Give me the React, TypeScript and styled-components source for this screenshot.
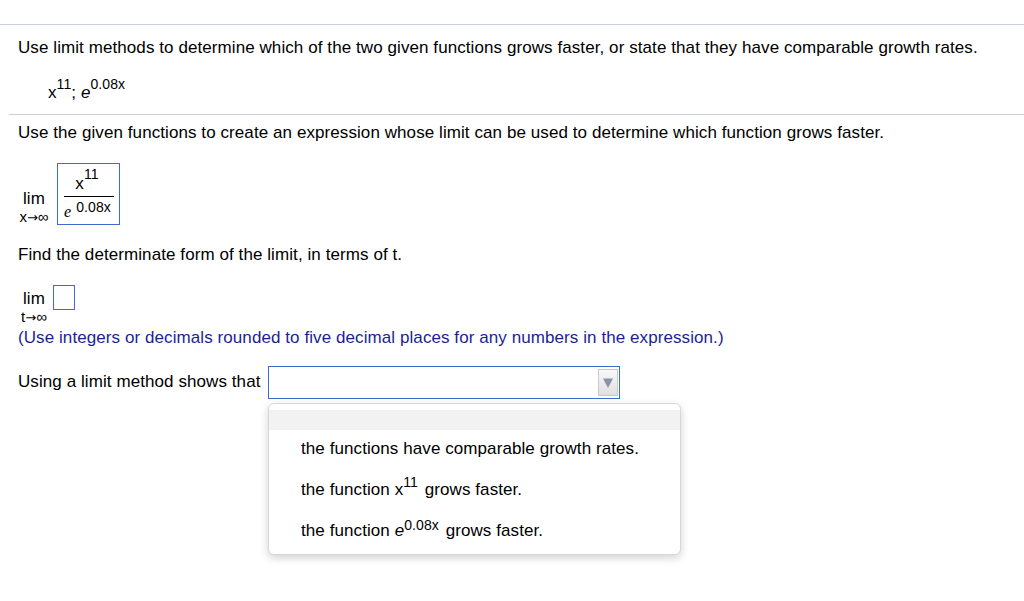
import React from "react";
import styled, { createGlobalStyle } from "styled-components";

const GlobalStyle = createGlobalStyle`
	body {
		margin: 0;
		background: #fff;
		font-family: "Liberation Sans", Arial, sans-serif;
		font-size: 17px;
		letter-spacing: 0.08px;
		color: #000;
	}
`;

const App = () => {
	return (
		<>
			<GlobalStyle />
			<Page>
				<Prompt>
					<Line>
						Use limit methods to determine which of the two given functions grows
						faster, or state that they have comparable growth rates.
					</Line>
					<Functions>
						x<Sup $raise={9}>11</Sup>; <E>e</E>
						<Sup $raise={9}>0.08x</Sup>
					</Functions>
				</Prompt>
				<Body>
					<Line>
						Use the given functions to create an expression whose limit can be used
						to determine which function grows faster.
					</Line>
					<LimitRow>
						<LimitLabel>
							<span>lim</span>
							<small>
								x<Arrow>→</Arrow>∞
							</small>
						</LimitLabel>
						<FractionBox>
							<Numerator>
								x<Sup $raise={10}>11</Sup>
							</Numerator>
							<Denominator>
								<SerifE>e</SerifE>
								<Sup $raise={5}>0.08x</Sup>
							</Denominator>
						</FractionBox>
					</LimitRow>
					<Line $top={20}>Find the determinate form of the limit, in terms of t.</Line>
					<AnswerRow>
						<LimitLabel $small>
							<span>lim</span>
							<small>
								t<Arrow>→</Arrow>∞
							</small>
						</LimitLabel>
						<AnswerBox />
					</AnswerRow>
					<Note>
						(Use integers or decimals rounded to five decimal places for any numbers
						in the expression.)
					</Note>
					<SelectRow>
						<SelectLabel>Using a limit method shows that</SelectLabel>
						<SelectWrap>
							<SelectBox>
								<ArrowButton>
									<svg width='12' height='12' viewBox='0 0 12 12'>
										<polygon points='1,1.5 11,1.5 6,11' fill='#8a93a6' />
									</svg>
								</ArrowButton>
							</SelectBox>
							<Menu>
								<MenuBlank />
								<MenuItem>the functions have comparable growth rates.</MenuItem>
								<MenuItem>
									the function x<Sup $raise={8} $gap={2}>11</Sup> grows faster.
								</MenuItem>
								<MenuItem>
									the function <E>e</E>
									<Sup $raise={6} $gap={2}>0.08x</Sup> grows faster.
								</MenuItem>
							</Menu>
						</SelectWrap>
					</SelectRow>
				</Body>
			</Page>
		</>
	);
};

const Page = styled.div`
	padding-top: 24px;
	min-height: 577px;
`;
const Prompt = styled.section`
	border-top: 1px solid #c8cdd9;
	padding: 13px 0 11px 18px;
`;
const Body = styled.section`
	margin-left: 9px;
	border-top: 1px solid #c8cdd9;
	padding: 8px 0 0 9px;
`;
const Line = styled.p<{ $top?: number }>`
	margin: ${(p) => p.$top ?? 0}px 0 0;
	line-height: 20px;
	white-space: nowrap;
`;
const Functions = styled.p`
	margin: 25px 0 0 30px;
	line-height: 20px;
`;
const Sup = styled.sup<{ $raise: number; $gap?: number }>`
	font-size: 14px;
	line-height: 0;
	vertical-align: ${(p) => p.$raise}px;
	margin-right: ${(p) => p.$gap ?? 0}px;
`;
const E = styled.i`
	font-style: italic;
`;
const SerifE = styled.i`
	font-family: "Liberation Serif", "Times New Roman", serif;
	font-size: 16px;
	font-style: italic;
	margin-right: 5px;
`;
const Arrow = styled.span`
	font-family: "DejaVu Sans", sans-serif;
	font-size: 13px;
`;
const LimitRow = styled.div`
	display: flex;
	align-items: flex-start;
	margin: 20px 0 0 -3px;
`;
const LimitLabel = styled.div<{ $small?: boolean }>`
	display: flex;
	flex-direction: column;
	align-items: center;
	width: ${(p) => (p.$small ? 34 : 38)}px;
	margin-top: ${(p) => (p.$small ? 4 : 26)}px;
	margin-right: ${(p) => (p.$small ? 2 : 4)}px;
	span {
		line-height: 20px;
	}
	small {
		font-size: 15px;
		line-height: 14px;
		margin-top: 1px;
		white-space: nowrap;
		letter-spacing: 0;
	}
	small span {
		line-height: 14px;
	}
`;
const FractionBox = styled.div`
	width: 50px;
	height: 60px;
	border: 1px solid #3c6ccc;
	padding: 0 5px 0 6px;
`;
const Numerator = styled.div`
	height: 33px;
	box-sizing: border-box;
	border-bottom: 1px solid #000;
	padding: 10px 4px 0 0;
	text-align: center;
	line-height: 20px;
`;
const Denominator = styled.div`
	padding-top: 5px;
	line-height: 20px;
	white-space: nowrap;
`;
const AnswerRow = styled.div`
	display: flex;
	align-items: flex-start;
	margin: 20px 0 0 -1px;
`;
const AnswerBox = styled.div`
	width: 20px;
	height: 23px;
	border: 1px solid #3c6ccc;
`;
const Note = styled.p`
	margin: 3px 0 0;
	line-height: 20px;
	color: #1c1f94;
	white-space: nowrap;
`;
const SelectRow = styled.div`
	display: flex;
	align-items: flex-start;
	margin-top: 18px;
`;
const SelectLabel = styled.span`
	line-height: 20px;
	margin-top: 6px;
	width: 250px;
	white-space: nowrap;
`;
const SelectWrap = styled.div`
	position: relative;
`;
const SelectBox = styled.div`
	width: 349px;
	height: 31px;
	border: 1px solid #3c6ccc;
	display: flex;
	justify-content: flex-end;
	align-items: center;
	padding-right: 1px;
`;
const ArrowButton = styled.div`
	width: 18px;
	height: 25px;
	border: 1px solid #c9c9c9;
	background: linear-gradient(#f8f8f8, #e0e0e0);
	display: flex;
	align-items: center;
	justify-content: center;
`;
const Menu = styled.div`
	position: absolute;
	left: 0;
	top: 37px;
	width: 411px;
	padding: 6px 0 1px;
	background: #fff;
	border: 1px solid #d8d8d8;
	border-radius: 6px;
	box-shadow: 0 3px 8px rgba(0, 0, 0, 0.18);
`;
const MenuBlank = styled.div`
	height: 20px;
	background: #f2f2f2;
`;
const MenuItem = styled.div`
	height: 41px;
	padding-left: 32px;
	line-height: 38px;
	white-space: nowrap;
`;

export default App;
